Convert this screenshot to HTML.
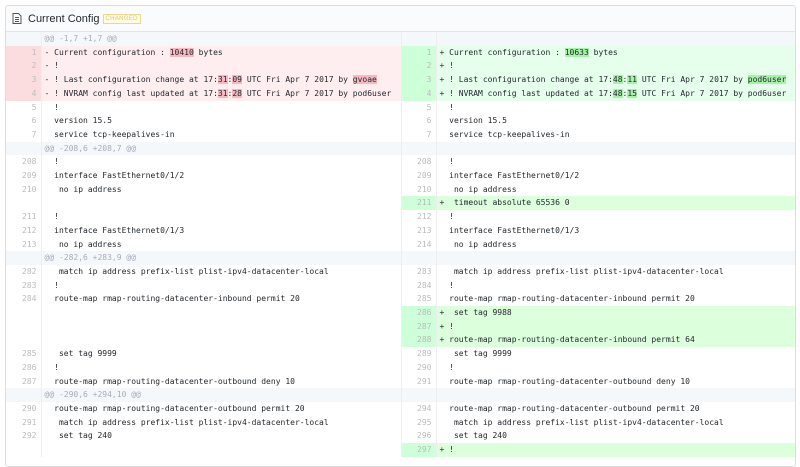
<!DOCTYPE html>
<html><head><meta charset="utf-8"><style>
body{margin:0;background:#fff;width:800px;height:450px;overflow:hidden;font-family:"Liberation Sans",sans-serif}
.box{position:absolute;left:5px;top:5px;width:789px;height:460px;border:1px solid #ddd;border-radius:3px;overflow:hidden}
.hd{height:25px;background:#fafbfc;border-bottom:1px solid #e1e4e8;display:flex;align-items:center;font-size:11px;color:#24292e;position:relative}
.hd svg{margin-left:6px;margin-right:6px}
.badge{margin-left:3px;font-size:6px;color:#dbc97a;border:1px solid #e8d98d;background:#fffbe0;padding:1px 2px;letter-spacing:.3px}
table{border-collapse:collapse;table-layout:fixed;width:789px;font-family:"DejaVu Sans Mono",monospace;font-size:8px;color:#24292e}
td{height:13.7px;padding:0;white-space:pre;overflow:hidden;line-height:13.7px}
td.n{text-align:right;padding-right:4px;color:#bbb;border-right:1px solid #eee}
td.c{padding-left:3px}
td.sep{border-left:1px solid #eee}
tr.h td{background:#f5f8fb;color:#aab}
.d{background:#ffeef0}.dn{background:#fbdde0!important}
.a{background:#e6ffed}.an{background:#cdffd8!important}
.a2{background:#dcffdc}
.x{background:#f7b8c1}.y{background:#a6f2a6}
</style></head><body>
<div class="box">
<div class="hd"><svg width="10" height="11" viewBox="0 0 10 11"><path d="M1 .5h5.5L9 3v7.5H1z" fill="none" stroke="#555" stroke-width="1"/><path d="M3 4.5h4M3 6.5h4M3 8.5h4" stroke="#555" stroke-width=".9"/></svg>Current Config<span class="badge">CHANGED</span></div>
<table>
<colgroup><col style="width:35px"><col style="width:360px"><col style="width:35px"><col style="width:359px"></colgroup>
<tr class="h"><td class="n"></td><td class="c">@@ -1,7 +1,7 @@</td><td class="n sep"></td><td class="c"></td></tr>
<tr><td class="n dn">1</td><td class="c d">- Current configuration : <span class="x">10410</span> bytes</td><td class="n an sep">1</td><td class="c a">+ Current configuration : <span class="y">10633</span> bytes</td></tr>
<tr><td class="n dn">2</td><td class="c d">- !</td><td class="n an sep">2</td><td class="c a">+ !</td></tr>
<tr><td class="n dn">3</td><td class="c d">- ! Last configuration change at 17:<span class="x">31</span>:<span class="x">09</span> UTC Fri Apr 7 2017 by <span class="x">gvoae</span></td><td class="n an sep">3</td><td class="c a">+ ! Last configuration change at 17:<span class="y">48</span>:<span class="y">11</span> UTC Fri Apr 7 2017 by <span class="y">pod6user</span></td></tr>
<tr><td class="n dn">4</td><td class="c d">- ! NVRAM config last updated at 17:<span class="x">31</span>:<span class="x">28</span> UTC Fri Apr 7 2017 by pod6user</td><td class="n an sep">4</td><td class="c a">+ ! NVRAM config last updated at 17:<span class="y">48</span>:<span class="y">15</span> UTC Fri Apr 7 2017 by pod6user</td></tr>
<tr><td class="n">5</td><td class="c">  !</td><td class="n sep">5</td><td class="c">  !</td></tr>
<tr><td class="n">6</td><td class="c">  version 15.5</td><td class="n sep">6</td><td class="c">  version 15.5</td></tr>
<tr><td class="n">7</td><td class="c">  service tcp-keepalives-in</td><td class="n sep">7</td><td class="c">  service tcp-keepalives-in</td></tr>
<tr class="h"><td class="n"></td><td class="c">@@ -208,6 +208,7 @@</td><td class="n sep"></td><td class="c"></td></tr>
<tr><td class="n">208</td><td class="c">  !</td><td class="n sep">208</td><td class="c">  !</td></tr>
<tr><td class="n">209</td><td class="c">  interface FastEthernet0/1/2</td><td class="n sep">209</td><td class="c">  interface FastEthernet0/1/2</td></tr>
<tr><td class="n">210</td><td class="c">   no ip address</td><td class="n sep">210</td><td class="c">   no ip address</td></tr>
<tr><td class="n"></td><td class="c"></td><td class="n an sep">211</td><td class="c a2">+  timeout absolute 65536 0</td></tr>
<tr><td class="n">211</td><td class="c">  !</td><td class="n sep">212</td><td class="c">  !</td></tr>
<tr><td class="n">212</td><td class="c">  interface FastEthernet0/1/3</td><td class="n sep">213</td><td class="c">  interface FastEthernet0/1/3</td></tr>
<tr><td class="n">213</td><td class="c">   no ip address</td><td class="n sep">214</td><td class="c">   no ip address</td></tr>
<tr class="h"><td class="n"></td><td class="c">@@ -282,6 +283,9 @@</td><td class="n sep"></td><td class="c"></td></tr>
<tr><td class="n">282</td><td class="c">   match ip address prefix-list plist-ipv4-datacenter-local</td><td class="n sep">283</td><td class="c">   match ip address prefix-list plist-ipv4-datacenter-local</td></tr>
<tr><td class="n">283</td><td class="c">  !</td><td class="n sep">284</td><td class="c">  !</td></tr>
<tr><td class="n">284</td><td class="c">  route-map rmap-routing-datacenter-inbound permit 20</td><td class="n sep">285</td><td class="c">  route-map rmap-routing-datacenter-inbound permit 20</td></tr>
<tr><td class="n"></td><td class="c"></td><td class="n an sep">286</td><td class="c a2">+  set tag 9988</td></tr>
<tr><td class="n"></td><td class="c"></td><td class="n an sep">287</td><td class="c a2">+ !</td></tr>
<tr><td class="n"></td><td class="c"></td><td class="n an sep">288</td><td class="c a2">+ route-map rmap-routing-datacenter-inbound permit 64</td></tr>
<tr><td class="n">285</td><td class="c">   set tag 9999</td><td class="n sep">289</td><td class="c">   set tag 9999</td></tr>
<tr><td class="n">286</td><td class="c">  !</td><td class="n sep">290</td><td class="c">  !</td></tr>
<tr><td class="n">287</td><td class="c">  route-map rmap-routing-datacenter-outbound deny 10</td><td class="n sep">291</td><td class="c">  route-map rmap-routing-datacenter-outbound deny 10</td></tr>
<tr class="h"><td class="n"></td><td class="c">@@ -290,6 +294,10 @@</td><td class="n sep"></td><td class="c"></td></tr>
<tr><td class="n">290</td><td class="c">  route-map rmap-routing-datacenter-outbound permit 20</td><td class="n sep">294</td><td class="c">  route-map rmap-routing-datacenter-outbound permit 20</td></tr>
<tr><td class="n">291</td><td class="c">   match ip address prefix-list plist-ipv4-datacenter-local</td><td class="n sep">295</td><td class="c">   match ip address prefix-list plist-ipv4-datacenter-local</td></tr>
<tr><td class="n">292</td><td class="c">   set tag 240</td><td class="n sep">296</td><td class="c">   set tag 240</td></tr>
<tr><td class="n"></td><td class="c"></td><td class="n an sep">297</td><td class="c a2">+ !</td></tr>
</table>
</div>
</body></html>
